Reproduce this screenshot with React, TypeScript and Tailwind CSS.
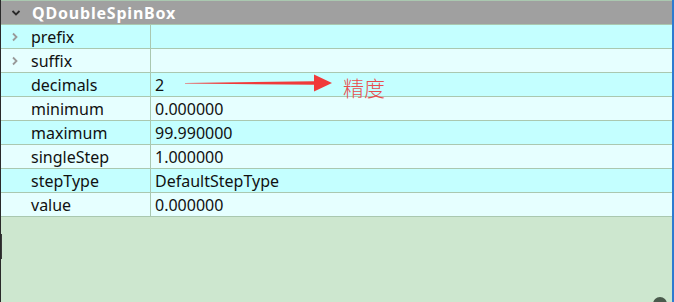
const rows = [
  { name: "prefix", value: "", expandable: true },
  { name: "suffix", value: "", expandable: true },
  { name: "decimals", value: "2" },
  { name: "minimum", value: "0.000000" },
  { name: "maximum", value: "99.990000" },
  { name: "singleStep", value: "1.000000" },
  { name: "stepType", value: "DefaultStepType" },
  { name: "value", value: "0.000000" },
];

function Chevron({ down, color }: { down?: boolean; color: string }) {
  return (
    <svg width="10" height="10" viewBox="0 0 10 10" className="shrink-0">
      <path
        d={down ? "M1.5 3 L5 6.5 L8.5 3" : "M3 1.5 L6.5 5 L3 8.5"}
        fill="none"
        stroke={color}
        strokeWidth="1.8"
      />
    </svg>
  );
}

export default function App() {
  return (
    <div
      className="relative w-[674px] h-[302px] overflow-hidden bg-[#cde7cf] border-l border-l-[#2a2a2a] border-r-2 border-r-[#2d7bd0] text-[16px] text-[#111]"
      style={{ fontFamily: '"Noto Sans", "Noto Sans CJK SC", sans-serif' }}
    >
      <div className="h-px bg-[#aac8b0]" />
      <div className="flex h-[24px] items-center bg-[#a0a0a0] border-b border-[#aac8b0] pl-[10px]">
        <Chevron down color="#2a2a2a" />
        <span className="ml-[11px] font-bold tracking-[0.8px] text-white leading-none">QDoubleSpinBox</span>
      </div>
      {rows.map((r, i) => (
        <div
          key={r.name}
          className={`flex h-[24px] border-b border-[#aac8b0] ${i % 2 === 0 ? "bg-[#c4ffff]" : "bg-[#e6ffff]"}`}
        >
          <div className="flex w-[150px] items-center border-r border-[#aac8b0] pl-[9px]">
            {r.expandable ? <Chevron color="#999999" /> : <span className="w-[10px]" />}
            <span className="ml-[11px] leading-none">{r.name}</span>
          </div>
          <div className="flex flex-1 items-center pl-[4px] leading-none">{r.value}</div>
        </div>
      ))}

      <div className="absolute left-[-1px] top-[234px] w-[2px] h-[25px] bg-[#3a3a3a]" />
      <svg className="absolute left-[184px] top-[73px]" width="150" height="20" viewBox="0 0 150 20">
        <polygon points="0,10 129,8.3 129,1.5 147,10 129,18.5 129,11.7 0,10.6" fill="#f03a3a" />
      </svg>
      <span
        className="absolute left-[342px] top-[77px] text-[21px] leading-none text-[#e84e4e]"
        style={{ fontFamily: '"Noto Sans CJK SC", sans-serif', fontWeight: 300 }}
      >
        精度
      </span>
      <div className="absolute right-[5px] bottom-[-6px] w-[14px] h-[11px] rounded-t-full bg-[#4a5a4c]" />
    </div>
  );
}
